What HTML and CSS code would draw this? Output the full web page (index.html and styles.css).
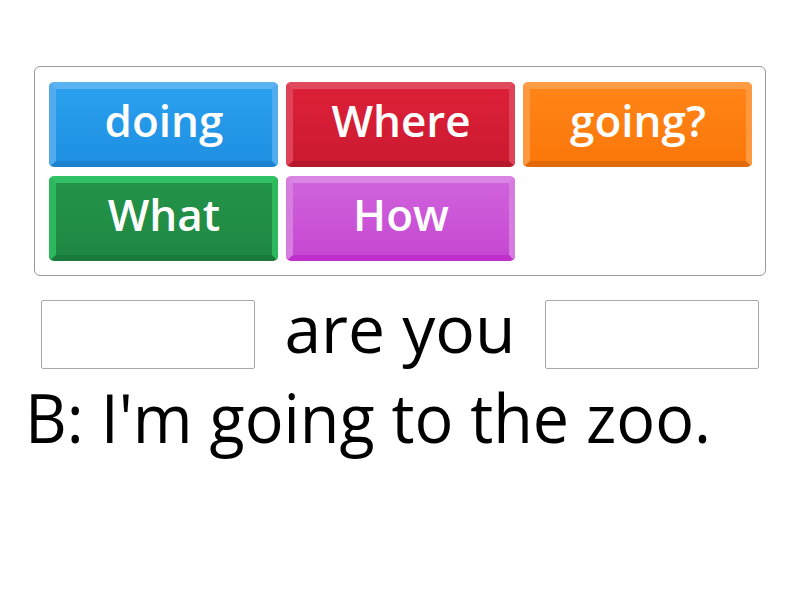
FILE: index.html
```html
<!DOCTYPE html>
<html>
<head>
<meta charset="utf-8">
<link rel="stylesheet" href="styles.css">
</head>
<body>
<div class="page">
  <div class="bank">
    <div class="tile blue"><span>doing</span></div>
    <div class="tile red"><span>Where</span></div>
    <div class="tile orange"><span>going?</span></div>
    <div class="tile green"><span>What</span></div>
    <div class="tile purple"><span>How</span></div>
  </div>
  <div class="sentence">
    <div class="blank"></div>
    <span class="words">are you</span>
    <div class="blank"></div>
  </div>
  <div class="answer">B: I'm going to the zoo.</div>
</div>
</body>
</html>
```
FILE: styles.css
```css
html, body {
  margin: 0;
  padding: 0;
  background: #fff;
}
.page {
  width: 800px;
  height: 600px;
  padding-top: 66px;
  box-sizing: border-box;
  font-family: "Open Sans", "DejaVu Sans", sans-serif;
}
.bank {
  margin: 0 34px;
  border: 1px solid #9a9a9a;
  border-radius: 6px;
  padding: 15px 14px 14px 14px;
  display: grid;
  grid-template-columns: repeat(3, 229px);
  grid-auto-rows: 85px;
  column-gap: 8px;
  row-gap: 9px;
}
.tile {
  border-radius: 5px;
  border-style: solid;
  border-width: 7px 6px 6px 7px;
  display: flex;
  align-items: center;
  justify-content: center;
  color: #fff;
  font-size: 44px;
  font-weight: 600;
  line-height: 1;
  box-sizing: border-box;
}
.tile span { margin-top: -11px; }
.blue {
  background: linear-gradient(#2aa0ee, #1f90e2);
  border-color: #5cb3f2 #52abef #1c82cf #52abef;
}
.red {
  background: linear-gradient(#dc2038, #cc1a31);
  border-color: #e14a5d #e04357 #b5172b #e04357;
}
.orange {
  background: linear-gradient(#ff8418, #fb780a);
  border-color: #ff9c45 #ff9940 #e06a08 #ff9940;
}
.green {
  background: linear-gradient(#239449, #1f8842);
  border-color: #32c064 #2eb85e #1b7a3b #2eb85e;
}
.purple {
  background: linear-gradient(#d062dc, #c648d2);
  border-color: #da84e3 #d77de0 #bf2fcc #d77de0;
}
.sentence {
  margin-top: 24px;
  display: flex;
  align-items: center;
  justify-content: center;
  gap: 29px;
}
.blank {
  width: 212px;
  height: 67px;
  border: 1px solid #a8a8a8;
  border-radius: 2px;
}
.words {
  font-size: 66px;
  line-height: 69px;
  color: #000;
  margin-top: -15px;
}
.answer {
  padding-left: 26px;
  font-size: 67px;
  line-height: 1;
  margin-top: 15px;
  color: #000;
  transform: scaleX(0.965);
  transform-origin: 0 0;
}
```
